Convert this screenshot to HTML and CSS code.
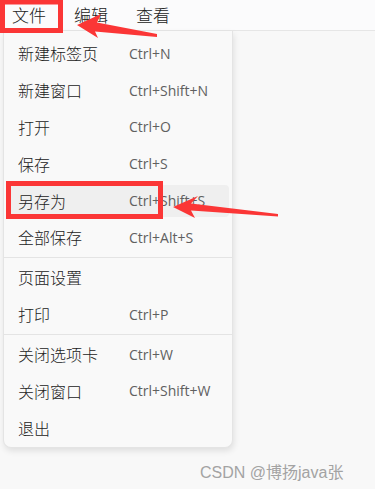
FILE: index.html
```html
<!DOCTYPE html>
<html lang="zh">
<head>
<meta charset="utf-8">
<link rel="stylesheet" href="styles.css">
</head>
<body>
<div class="page">
  <div class="menubar">
    <span class="top-item">文件</span>
    <span class="top-item">编辑</span>
    <span class="top-item">查看</span>
  </div>
  <div class="menu">
    <div class="item"><div class="item-in"><span class="label">新建标签页</span><span class="key">Ctrl+N</span></div></div>
    <div class="item"><div class="item-in"><span class="label">新建窗口</span><span class="key">Ctrl+Shift+N</span></div></div>
    <div class="item"><div class="item-in"><span class="label">打开</span><span class="key">Ctrl+O</span></div></div>
    <div class="item"><div class="item-in"><span class="label">保存</span><span class="key">Ctrl+S</span></div></div>
    <div class="item active"><div class="item-in"><span class="label">另存为</span><span class="key">Ctrl+Shift+S</span></div></div>
    <div class="item"><div class="item-in"><span class="label">全部保存</span><span class="key">Ctrl+Alt+S</span></div></div>
    <div class="sep"></div>
    <div class="item"><div class="item-in"><span class="label">页面设置</span></div></div>
    <div class="item"><div class="item-in"><span class="label">打印</span><span class="key">Ctrl+P</span></div></div>
    <div class="sep"></div>
    <div class="item"><div class="item-in"><span class="label">关闭选项卡</span><span class="key">Ctrl+W</span></div></div>
    <div class="item"><div class="item-in"><span class="label">关闭窗口</span><span class="key">Ctrl+Shift+W</span></div></div>
    <div class="item"><div class="item-in"><span class="label">退出</span></div></div>
  </div>
  <div class="watermark">CSDN @博扬java张</div>
  <svg class="annot" width="375" height="489" viewBox="0 0 375 489">
    <rect class="box" x="2.5" y="2" width="58" height="28.5"/>
    <rect class="box" x="8.5" y="183.5" width="152" height="33"/>
    <polygon class="arrow" points="77,25 101,14 97,22.5 157,34 157,37 95,31.5 98,38"/>
    <polygon class="arrow" points="173,207 198,196 191,203.5 278,214 278,216.5 191,210.5 195,218"/>
  </svg>
</div>
</body>
</html>
```
FILE: styles.css
```css
html, body {
  margin: 0;
  padding: 0;
}
body {
  width: 375px;
  height: 489px;
  overflow: hidden;
  background: #f8f8f8;
  font-family: "Noto Sans CJK SC", "Noto Sans", sans-serif;
}
.page {
  position: relative;
  width: 375px;
  height: 489px;
}
.menubar {
  height: 30px;
  background: #fbfbfc;
  border-bottom: 1px solid #e6e6e6;
  display: flex;
  align-items: center;
  padding-left: 12px;
  gap: 28px;
}
.top-item {
  font-size: 17px;
  line-height: 30px;
  font-weight: 300;
  color: #222222;
}
.menu {
  margin-left: 3px;
  width: 230px;
  background: #f9f9f9;
  border: 1px solid #e4e4e4;
  border-top: none;
  border-radius: 0 0 8px 8px;
  box-sizing: border-box;
  padding: 4px 0 1px;
  box-shadow: 1px 3px 6px rgba(0,0,0,0.10);
}
.item {
  height: 36.8px;
  box-sizing: border-box;
  padding: 2.4px 3px;
}
.item-in {
  height: 32px;
  display: flex;
  align-items: center;
  padding-left: 11px;
  border-radius: 4px;
}
.active .item-in {
  background: #efefef;
}
.label {
  width: 111px;
  font-size: 16px;
  font-weight: 300;
  color: #222222;
}
.key {
  font-family: "Open Sans", "Noto Sans", sans-serif;
  font-size: 14px;
  color: #606060;
}
.sep {
  height: 1px;
  background: #e4e4e4;
  margin: 1.1px 0;
}
.watermark {
  position: absolute;
  left: 200px;
  top: 459px;
  font-family: "Liberation Sans", "Noto Sans CJK SC", sans-serif;
  font-size: 16px;
  color: #a3a3a3;
}
.annot {
  position: absolute;
  left: 0;
  top: 0;
  pointer-events: none;
}
.box {
  fill: none;
  stroke: #fb3636;
  stroke-width: 5;
}
.arrow {
  fill: #fb3636;
}
```
